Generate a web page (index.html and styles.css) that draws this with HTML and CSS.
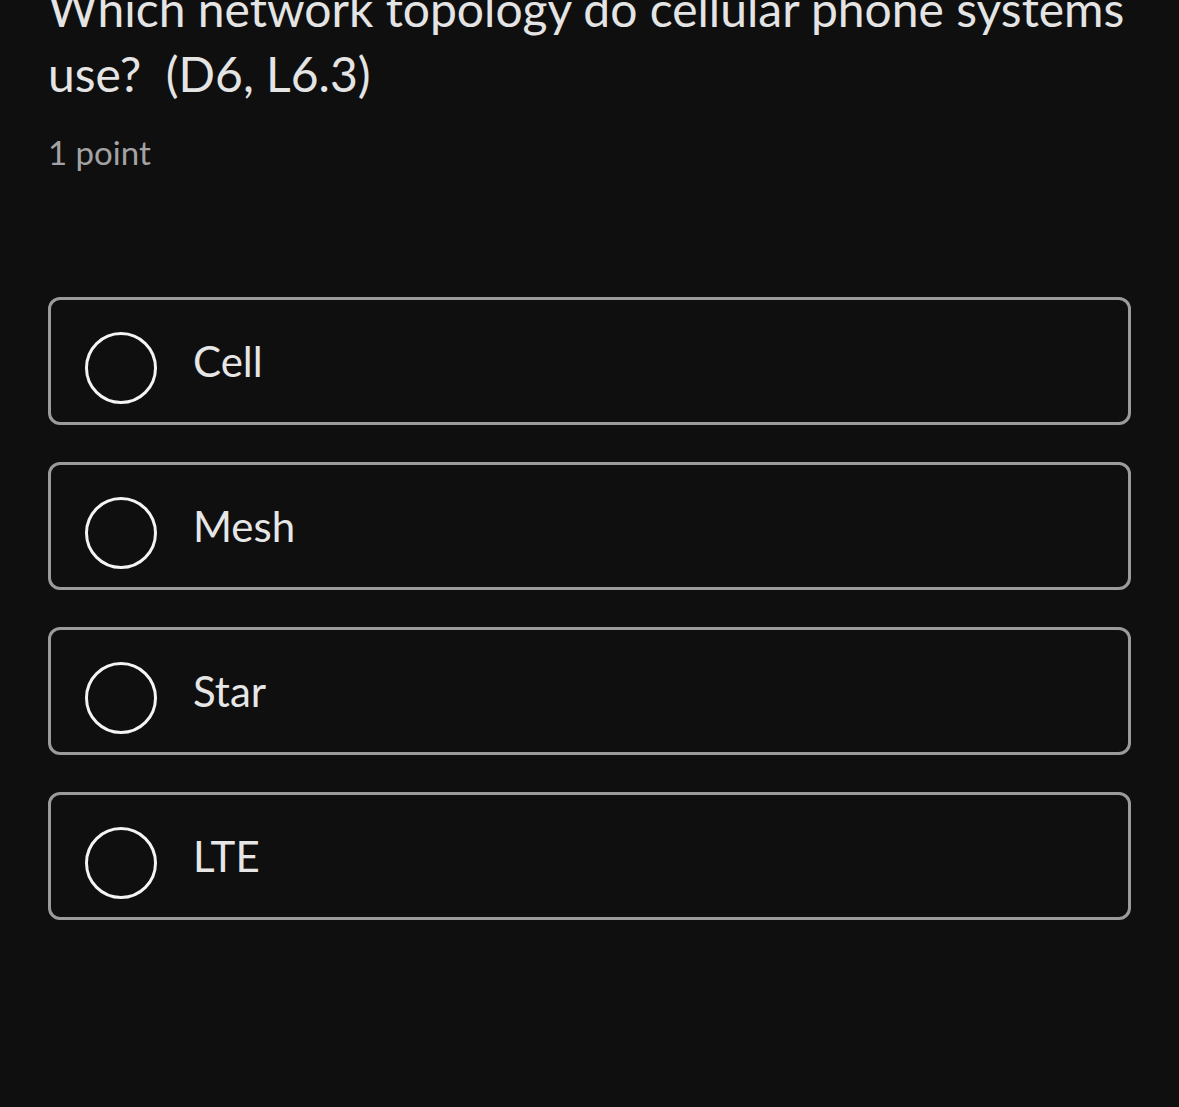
FILE: index.html
```html
<!DOCTYPE html>
<html lang="en">
<head>
    <meta charset="UTF-8">
    <title>Quiz Question</title>
    <link rel="stylesheet" href="styles.css">
</head>
<body>
<div class="question">
    <h1 class="question_title">Which network topology do cellular phone systems use?&nbsp; (D6, L6.3)</h1>
    <p class="question_points">1 point</p>

    <div class="options">
        <label class="option">
            <input type="radio" name="answer" value="cell">
            <span class="option_circle"></span>
            <span class="option_text">Cell</span>
        </label>
        <label class="option">
            <input type="radio" name="answer" value="mesh">
            <span class="option_circle"></span>
            <span class="option_text">Mesh</span>
        </label>
        <label class="option">
            <input type="radio" name="answer" value="star">
            <span class="option_circle"></span>
            <span class="option_text">Star</span>
        </label>
        <label class="option">
            <input type="radio" name="answer" value="lte">
            <span class="option_circle"></span>
            <span class="option_text">LTE</span>
        </label>
    </div>
</div>
</body>
</html>
```

FILE: styles.css
```css
html, body {
  margin: 0;
  background: #0f0f0f;
  height: 100%;
}

body {
  font-family: "Lato", "Noto Sans", sans-serif;
  color: #e6e6e6;
}

.question {
  padding: 0 48px 0 48px;
}

.question_title {
  margin: -24px 0 0 0;
  font-size: 48px;
  font-weight: 400;
  line-height: 65px;
  color: #e4e4e4;
}

.question_points {
  margin: 26px 0 0 0;
  font-size: 33px;
  line-height: 40px;
  color: #a3a3a3;
}

.options {
  display: flex;
  flex-direction: column;
  gap: 37px;
  margin-top: 125px;
}

.option {
  display: flex;
  align-items: center;
  height: 128px;
  box-sizing: border-box;
  border: 3px solid #9b9b9b;
  border-radius: 12px;
  padding-left: 34px;
  cursor: pointer;
}

.option input {
  display: none;
}

.option_circle {
  width: 72px;
  height: 72px;
  box-sizing: border-box;
  border: 3px solid #f4f4f4;
  border-radius: 50%;
  flex-shrink: 0;
  margin-top: 14px;
}

.option_text {
  margin-left: 36px;
  font-size: 42px;
  color: #e6e6e6;
}
```
